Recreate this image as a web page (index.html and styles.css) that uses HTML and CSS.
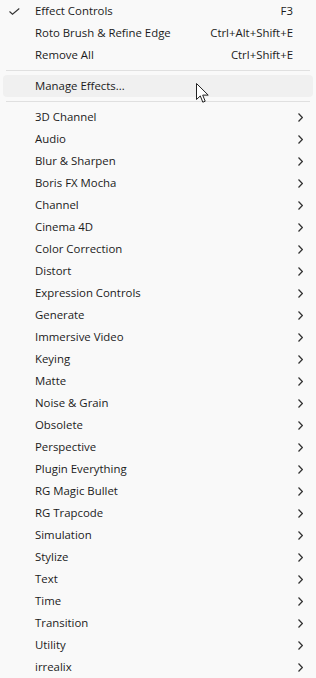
FILE: index.html
```html
<!DOCTYPE html>
<html lang="en">
<head>
    <meta charset="UTF-8">
    <title>Effect Menu</title>
    <link rel="stylesheet" href="styles.css">
</head>
<body>
    <ul class="menu">
        <li class="item">
            <svg class="check" width="11" height="7" viewBox="0 0 11 7"><path d="M0.5 3.5 L3.5 6.2 L10.3 0.5" fill="none" stroke="#333" stroke-width="1.1"/></svg>
            <span class="label">Effect Controls</span><span class="key">F3</span>
        </li>
        <li class="item"><span class="label">Roto Brush &amp; Refine Edge</span><span class="key">Ctrl+Alt+Shift+E</span></li>
        <li class="item"><span class="label">Remove All</span><span class="key">Ctrl+Shift+E</span></li>
        <li class="sep"></li>
        <li class="item hover"><span class="label">Manage Effects...</span></li>
        <li class="sep"></li>
        <li class="item sub"><span class="label">3D Channel</span></li>
        <li class="item sub"><span class="label">Audio</span></li>
        <li class="item sub"><span class="label">Blur &amp; Sharpen</span></li>
        <li class="item sub"><span class="label">Boris FX Mocha</span></li>
        <li class="item sub"><span class="label">Channel</span></li>
        <li class="item sub"><span class="label">Cinema 4D</span></li>
        <li class="item sub"><span class="label">Color Correction</span></li>
        <li class="item sub"><span class="label">Distort</span></li>
        <li class="item sub"><span class="label">Expression Controls</span></li>
        <li class="item sub"><span class="label">Generate</span></li>
        <li class="item sub"><span class="label">Immersive Video</span></li>
        <li class="item sub"><span class="label">Keying</span></li>
        <li class="item sub"><span class="label">Matte</span></li>
        <li class="item sub"><span class="label">Noise &amp; Grain</span></li>
        <li class="item sub"><span class="label">Obsolete</span></li>
        <li class="item sub"><span class="label">Perspective</span></li>
        <li class="item sub"><span class="label">Plugin Everything</span></li>
        <li class="item sub"><span class="label">RG Magic Bullet</span></li>
        <li class="item sub"><span class="label">RG Trapcode</span></li>
        <li class="item sub"><span class="label">Simulation</span></li>
        <li class="item sub"><span class="label">Stylize</span></li>
        <li class="item sub"><span class="label">Text</span></li>
        <li class="item sub"><span class="label">Time</span></li>
        <li class="item sub"><span class="label">Transition</span></li>
        <li class="item sub"><span class="label">Utility</span></li>
        <li class="item sub"><span class="label">irrealix</span></li>
    </ul>

    <!-- mouse pointer over "Manage Effects..." -->
    <svg class="cursor" width="14" height="21" viewBox="0 0 14 21">
        <path d="M0.5 0.5 L0.5 16.5 L4.3 12.9 L6.8 19.2 L9.2 18.2 L6.7 12.1 L12.2 12.1 Z" fill="#fff" stroke="#222" stroke-width="1" stroke-linejoin="miter"/>
    </svg>

    <script>
        // add the submenu chevron to every category row
        document.querySelectorAll('.item.sub').forEach(function (row) {
            row.insertAdjacentHTML('beforeend',
                '<svg class="arrow" width="5" height="9" viewBox="0 0 5 9"><path d="M0.5 0.5 L4.3 4.5 L0.5 8.5" fill="none" stroke="#333" stroke-width="1.2"/></svg>');
        });
    </script>
</body>
</html>
```

FILE: styles.css
```css
body {
    margin: 0;
    background: #f9f9f9;
    font-family: "Open Sans", "Noto Sans", sans-serif;
    font-size: 11.4px;
    color: #1b1b1b;
    position: relative;
    height: 678px;
    overflow: hidden;
}
.menu {
    list-style: none;
    margin: 0;
    padding: 0;
}
.item {
    position: relative;
    display: flex;
    align-items: center;
    height: 22px;
    padding: 0 23px 0 32px;
    margin: 0 3px;
    border-radius: 4px;
}
.item.sub {
    padding-right: 10px;
}
.item.hover {
    background: #f0f0f0;
}
.label {
    flex: 1;
    white-space: nowrap;
    margin-top: -1px;
}
.key {
    white-space: nowrap;
    margin-right: -3px;
    margin-top: -1px;
}
.check {
    position: absolute;
    left: 6px;
    top: 8px;
}
.arrow {
    display: block;
    margin-top: 1px;
}
.sep {
    height: 1px;
    background: #e0e0e0;
    margin: 4px 6px;
}
.cursor {
    position: absolute;
    left: 196px;
    top: 83px;
}
```
